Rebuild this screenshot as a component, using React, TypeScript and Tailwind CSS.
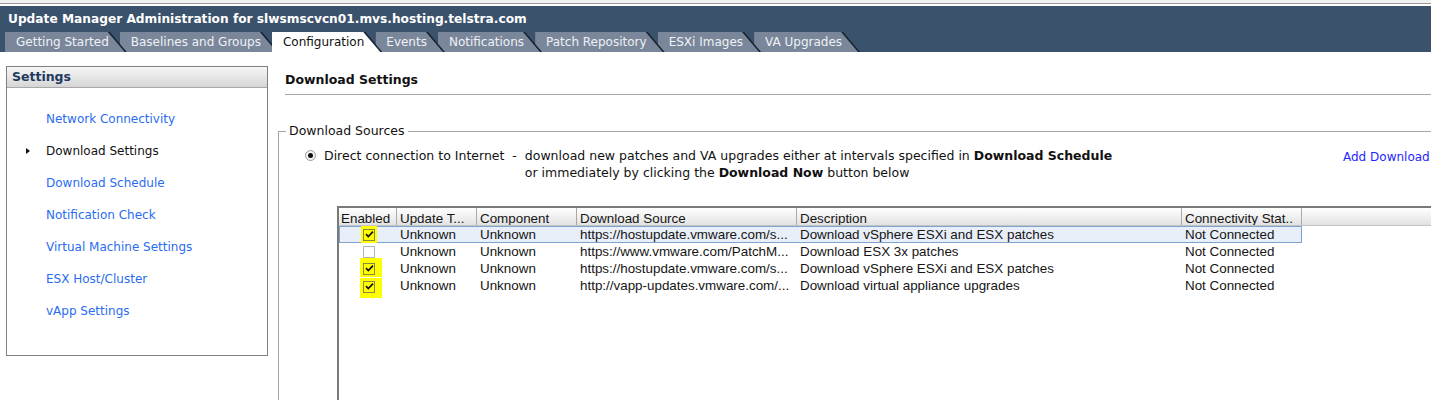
import React from 'react';

const tabs = [
  { label: 'Getting Started', z: 'z-[9]' },
  { label: 'Baselines and Groups', z: 'z-[8]' },
  { label: 'Configuration', z: 'z-[20]', active: true },
  { label: 'Events', z: 'z-[6]' },
  { label: 'Notifications', z: 'z-[5]' },
  { label: 'Patch Repository', z: 'z-[4]' },
  { label: 'ESXi Images', z: 'z-[3]' },
  { label: 'VA Upgrades', z: 'z-[2]' },
];

const navItems = [
  'Network Connectivity',
  'Download Settings',
  'Download Schedule',
  'Notification Check',
  'Virtual Machine Settings',
  'ESX Host/Cluster',
  'vApp Settings',
];

const columns = [
  { label: 'Enabled', w: 'w-[58px]', pl: 'pl-[2px]' },
  { label: 'Update T...', w: 'w-[80px]', pl: 'pl-[3px]' },
  { label: 'Component', w: 'w-[100px]', pl: 'pl-[3px]' },
  { label: 'Download Source', w: 'w-[220px]', pl: 'pl-[3px]' },
  { label: 'Description', w: 'w-[385px]', pl: 'pl-[3px]' },
  { label: 'Connectivity Stat..', w: 'w-[120px]', pl: 'pl-[3px]' },
];

const rows = [
  {
    enabled: true,
    hl: 'h-[17px] -mt-px ml-[21px] w-[16px] pl-[2px] bg-[#ffff00]',
    source: 'https://hostupdate.vmware.com/s...',
    desc: 'Download vSphere ESXi and ESX patches',
    selected: true,
  },
  {
    enabled: false,
    hl: 'h-full ml-[21px] w-[16px] pl-[2px]',
    source: 'https://www.vmware.com/PatchM...',
    desc: 'Download ESX 3x patches',
  },
  {
    enabled: true,
    hl: 'h-[19px] -mt-[3px] ml-[20px] w-[22px] pl-[3px] pt-[2px] bg-[#ffff00]',
    source: 'https://hostupdate.vmware.com/s...',
    desc: 'Download vSphere ESXi and ESX patches',
  },
  {
    enabled: true,
    hl: 'h-[20px] ml-[20px] w-[22px] pl-[3px] pb-[3px] bg-[#ffff00]',
    source: 'http://vapp-updates.vmware.com/...',
    desc: 'Download virtual appliance upgrades',
  },
];

const Checkbox = ({ checked }: { checked: boolean }) =>
  checked ? (
    <span className="flex h-[12px] w-[12px] items-center justify-center border border-[#8a8a3c]">
      <svg width="9" height="9" viewBox="0 0 9 9">
        <path d="M1 4.2 L3.3 6.6 L8 1.6" fill="none" stroke="#111" strokeWidth="1.7" />
      </svg>
    </span>
  ) : (
    <span className="h-[12px] w-[12px] border border-[#b4b4b4] bg-white" />
  );

export default function App() {
  return (
    <div className="h-[400px] w-[1431px] overflow-hidden bg-white font-['DejaVu_Sans',Tahoma,sans-serif] text-[12.5px] text-[#111]">
      {/* window top edge */}
      <div className="h-[3px] bg-[#f0f0f0]" />
      <div className="h-px bg-[#9a9a9a]" />
      <div className="h-[2px] bg-white" />

      {/* title + tabs */}
      <div className="h-[46px] bg-[#3b526c] pt-[5px]">
        <div className="pl-[8px] text-[12.2px] leading-[16px] font-bold text-white">
          Update Manager Administration for slwsmscvcn01.mvs.hosting.telstra.com
        </div>
        <div className="mt-[5px] flex h-[20px] pl-[5px] text-[12px]">
          {tabs.map((t) => (
            <div
              key={t.label}
              className={`relative ${t.z} -mr-[7px] flex h-[20px] bg-[#16212e] [clip-path:polygon(0_0,calc(100%-17px)_0,100%_100%,0_100%)]`}
            >
              <div
                className={`mr-[2px] flex h-full items-center pr-[16px] pl-[11px] leading-[16px] [clip-path:polygon(0_0,calc(100%-17px)_0,100%_100%,0_100%)] ${
                  t.active ? 'bg-white text-[#111]' : 'bg-[#7a879b] text-[#eef1f5]'
                }`}
              >
                {t.label}
              </div>
            </div>
          ))}
        </div>
      </div>

      <div className="flex">
        {/* left settings panel */}
        <div className="w-[278px] shrink-0 pt-[14px] pl-[6px]">
          <div className="h-[290px] w-[262px] border border-[#808080]">
            <div className="h-[21px] border-b border-[#a8a8a8] bg-gradient-to-b from-[#f6f6f6] to-[#d6d6d6] pl-[5px] leading-[20px] font-bold text-[#1d3a5e]">
              Settings
            </div>
            <div className="pt-[15px] text-[12px]">
              {navItems.map((item) => {
                const current = item === 'Download Settings';
                return (
                  <div key={item} className="flex h-[32px] items-center">
                    <span className="flex w-[39px] justify-center pl-[3px]">
                      {current && (
                        <svg width="4" height="6" viewBox="0 0 4 6">
                          <path d="M0 0 L4 3 L0 6 Z" fill="#111" />
                        </svg>
                      )}
                    </span>
                    <span className={current ? 'text-[#111]' : 'text-[#2a6cf0]'}>{item}</span>
                  </div>
                );
              })}
            </div>
          </div>
        </div>

        {/* right content */}
        <div className="min-w-0 flex-1">
          <div className="ml-[7px] border-b border-[#a6a6a6] pt-[20px] pb-[6px] leading-[16px] font-bold">
            Download Settings
          </div>

          <fieldset className="mt-[28px] w-[1300px] border-t border-l border-[#a6a6a6] pt-[8px]">
            <legend className="ml-[7px] px-[3px] leading-[16px]">Download Sources</legend>

            <div className="flex">
              <div className="flex w-[1064px] shrink-0 pl-[26px]">
                <span className="mt-[3px] flex h-[11px] w-[11px] items-center justify-center rounded-full border border-[#9a9a9a] bg-[#f4f4f4]">
                  <span className="h-[5px] w-[5px] rounded-full bg-[#111]" />
                </span>
                <span className="ml-[8px] leading-[17px] whitespace-pre">Direct connection to Internet  -  </span>
                <div className="leading-[17px]">
                  <div>
                    download new patches and VA upgrades either at intervals specified in{' '}
                    <b>Download Schedule</b>
                  </div>
                  <div>
                    or immediately by clicking the <b>Download Now</b> button below
                  </div>
                </div>
              </div>
              <span className="mt-[2px] text-[12px] leading-[17px] whitespace-nowrap text-[#1f1fff]">Add Download</span>
            </div>

            {/* download sources grid */}
            <div className="mt-[25px] ml-[58px] h-[200px] border-t-2 border-l-2 border-[#7a7a7a] font-['Liberation_Sans',Arial,sans-serif] text-[13.4px] text-[#151515]">
              <div className="flex h-[18px] border-b border-[#c4c4c4] bg-gradient-to-b from-[#ffffff] to-[#e2e2e2]">
                {columns.map((c) => (
                  <div
                    key={c.label}
                    className={`${c.w} ${c.pl} h-full shrink-0 overflow-hidden border-r border-[#a8a8a8] pt-[4px] leading-[13px] whitespace-nowrap`}
                  >
                    {c.label}
                  </div>
                ))}
                <div className="flex-1" />
              </div>

              {rows.map((r, i) => (
                <div
                  key={i}
                  className={`flex h-[17px] w-[963px] leading-[15px] ${
                    r.selected ? 'border border-[#7ea3cf] bg-[#e9eff8]' : 'border border-transparent'
                  }`}
                >
                  <div className="w-[57px] shrink-0">
                    <div className={`flex items-center ${r.hl}`}>
                      <Checkbox checked={r.enabled} />
                    </div>
                  </div>
                  <div className="w-[80px] shrink-0 pl-[3px]">Unknown</div>
                  <div className="w-[100px] shrink-0 pl-[3px]">Unknown</div>
                  <div className="w-[220px] shrink-0 overflow-hidden pl-[3px] whitespace-nowrap">{r.source}</div>
                  <div className="w-[385px] shrink-0 pl-[3px]">{r.desc}</div>
                  <div className="w-[120px] shrink-0 pl-[3px] whitespace-nowrap">Not Connected</div>
                </div>
              ))}
            </div>
          </fieldset>
        </div>
      </div>
    </div>
  );
}
